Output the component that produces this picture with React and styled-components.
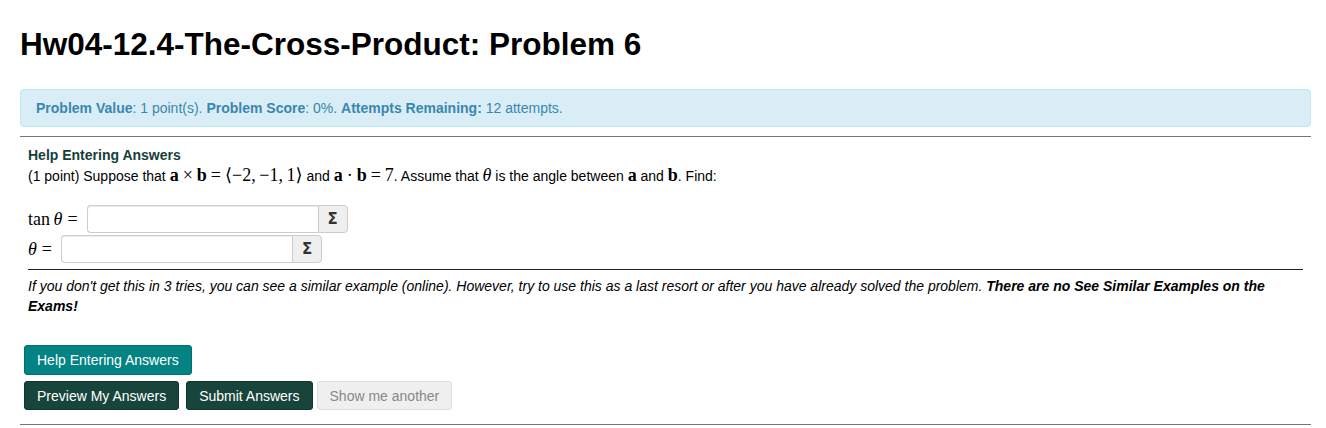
import React from "react"
import styled, { createGlobalStyle } from "styled-components"

const GlobalStyle = createGlobalStyle`
  body {
    margin: 0;
    background: #fff;
    font-family: "Liberation Sans", Arial, sans-serif;
    color: #000;
  }
`

const Page = styled.div`
  width: 1291px;
  padding: 0 15px 0 20px;
`

const Title = styled.h1`
  margin: 0;
  padding-top: 24px;
  font-size: 31.5px;
  line-height: 40px;
  font-weight: bold;
  color: #000;
`

const Alert = styled.div`
  margin-top: 25px;
  box-sizing: border-box;
  height: 38px;
  padding: 0 15px;
  display: flex;
  align-items: center;
  background: #d9edf7;
  border: 1px solid #bce8f1;
  border-radius: 4px;
  color: #3a87ad;
  font-size: 14px;

  b {
    font-weight: bold;
  }
`

const Rule = styled.hr`
  margin: ${props => props.margin || "0"};
  border: 0;
  border-top: 1px solid ${props => props.color || "#777"};
  height: 0;
`

const Problem = styled.div`
  padding: 8px 8px 0 8px;
  font-size: 14px;
  line-height: 20px;
`

const HelpHeading = styled.div`
  font-weight: bold;
  color: #15403a;
`

const Math = styled.span`
  font-family: "Liberation Serif", "DejaVu Serif", serif;
  font-size: ${props => props.size || "inherit"};
  font-style: ${props => (props.italic ? "italic" : "normal")};
  font-weight: ${props => (props.bold ? "bold" : "normal")};
`

const Rel = styled.span`
  margin: 0 ${props => props.space || "4px"};
`

const Answers = styled.div`
  margin-top: 19px;
  display: flex;
  flex-direction: column;
  gap: 2px;
`

const AnswerRow = styled.div`
  display: flex;
  align-items: center;
  gap: 4px;
`

const InputGroup = styled.div`
  display: flex;
  height: 28px;
`

const TextInput = styled.input`
  box-sizing: border-box;
  width: 231px;
  height: 28px;
  border: 1px solid #ccc;
  border-right: 0;
  border-radius: 4px 0 0 4px;
  box-shadow: inset 0 1px 1px rgba(0, 0, 0, 0.075);
  padding: 4px 6px;
  font-size: 14px;
`

const SigmaButton = styled.button`
  box-sizing: border-box;
  width: 30px;
  height: 28px;
  border: 1px solid #ccc;
  border-radius: 0 4px 4px 0;
  background: #efefef;
  font-family: "DejaVu Sans", sans-serif;
  font-weight: bold;
  font-size: 15px;
  color: #333;
  padding: 0;
`

const Note = styled.p`
  margin: 6px 0 0;
  font-style: italic;
  font-size: 14px;
  line-height: 20px;

  b {
    font-weight: bold;
  }
`

const Buttons = styled.div`
  margin-top: 29px;
  padding-left: 4px;
  display: flex;
  flex-direction: column;
  gap: 6px;
`

const ButtonRow = styled.div`
  display: flex;
  gap: 7px;
`

const Button = styled.button`
  box-sizing: border-box;
  height: ${props => (props.tall ? "30px" : "29px")};
  margin-left: ${props => props.pull || "0"};
  padding: 0 12px;
  font-family: "Liberation Sans", Arial, sans-serif;
  font-size: 14px;
  border-radius: 3px;
  border: 1px solid ${props => props.border};
  background: ${props => props.bg};
  color: ${props => props.fg};
`

const Ans = ({ children }) => (
  <AnswerRow>
    {children}
    <InputGroup>
      <TextInput />
      <SigmaButton>Σ</SigmaButton>
    </InputGroup>
  </AnswerRow>
)

const App = () => (
  <Page>
    <GlobalStyle />
    <Title>Hw04-12.4-The-Cross-Product: Problem 6</Title>

    <Alert>
      <span>
        <b>Problem Value</b>: 1 point(s). <b>Problem Score</b>: 0%.{" "}
        <b>Attempts Remaining:</b> 12 attempts.
      </span>
    </Alert>

    <Rule margin="9px 0 0" />

    <Problem>
      <HelpHeading>Help Entering Answers</HelpHeading>
      <div>
        (1 point) Suppose that{" "}
        <Math size="18px">
          <Math bold>a</Math>
          <Rel>×</Rel>
          <Math bold>b</Math>
          <Rel>=</Rel>⟨−2,&thinsp;−1,&thinsp;1⟩
        </Math>{" "}
        and{" "}
        <Math size="18px">
          <Math bold>a</Math>
          <Rel>·</Rel>
          <Math bold>b</Math>
          <Rel>=</Rel>7
        </Math>
        . Assume that{" "}
        <Math size="18px" italic>
          θ
        </Math>{" "}
        is the angle between{" "}
        <Math size="18px" bold>
          a
        </Math>{" "}
        and{" "}
        <Math size="18px" bold>
          b
        </Math>
        . Find:
      </div>

      <Answers>
        <Ans>
          <Math size="18px">
            tan&thinsp;<Math italic>θ</Math>
            <Rel space="5px">=</Rel>
          </Math>
        </Ans>
        <Ans>
          <Math size="18px">
            <Math italic>θ</Math>
            <Rel space="5px">=</Rel>
          </Math>
        </Ans>
      </Answers>

      <Rule margin="6px 0 0" color="#222" />

      <Note>
        {"If you don't get this in 3 tries, you can see a similar example (online). However, try to use this as a last resort or after you have already solved the problem. "}
        <b>There are no See Similar Examples on the Exams!</b>
      </Note>
    </Problem>

    <Buttons>
      <div>
        <Button tall bg="#038383" border="#027070" fg="#fff">
          Help Entering Answers
        </Button>
      </div>
      <ButtonRow>
        <Button bg="#17453b" border="#10352d" fg="#fff">
          Preview My Answers
        </Button>
        <Button bg="#17453b" border="#10352d" fg="#fff">
          Submit Answers
        </Button>
        <Button pull="-3px" bg="#efefef" border="#ddd" fg="#888">
          Show me another
        </Button>
      </ButtonRow>
    </Buttons>

    <Rule margin="14px 0 0" />
  </Page>
)

export default App
